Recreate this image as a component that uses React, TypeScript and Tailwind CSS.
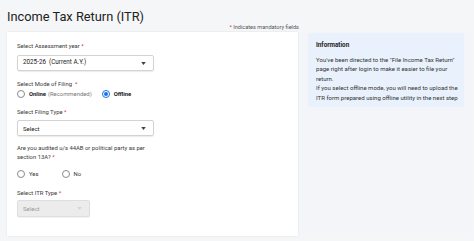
function Req() {
  return <span className="text-[#d32f2f]"> *</span>;
}

function Caret({ muted }: { muted?: boolean }) {
  return (
    <svg width="5" height="3" viewBox="0 0 6 4" className={muted ? "text-gray-300" : "text-gray-700"}>
      <path d="M0 0h6L3 4z" fill="currentColor" />
    </svg>
  );
}

function Radio({ checked, children }: { checked?: boolean; children: React.ReactNode }) {
  return (
    <label className="flex items-center gap-[4px]">
      <span
        className={`flex h-[8px] w-[8px] items-center justify-center rounded-full border ${
          checked ? "border-[#1a73e8]" : "border-[#8a8a8a]"
        }`}
      >
        {checked && <span className="h-[4px] w-[4px] rounded-full bg-[#1a73e8]" />}
      </span>
      {children}
    </label>
  );
}

export default function App() {
  return (
    <div
      className="h-[241px] w-[474px] overflow-hidden bg-[#f5f6f8] text-[#333]"
      style={{ fontFamily: "Roboto, 'Noto Sans', sans-serif" }}
    >
      <div className="flex w-[299px] flex-col pl-[7px] pt-[9px]">
        <h1 className="text-[12.8px] leading-[16px] text-[#222]">Income Tax Return (ITR)</h1>
        <div className="-mt-[1px] text-right text-[5.6px] leading-[6px] text-[#555]">
          <span className="text-[#d32f2f]">*</span> Indicates mandatory fields
        </div>
      </div>
      <div className="mt-[2px] flex gap-[2px] pl-[7px]">
        <div className="h-[204px] w-[291px] bg-white px-[10px] pt-[10px] text-[5.9px] shadow-[0_0_2px_rgba(0,0,0,0.1)]">
          <div className="leading-[8px] text-[#3a3a3a]">
            Select Assessment year<Req />
          </div>
          <div className="mt-[5px] flex h-[16px] w-[137px] items-center justify-between rounded-[2px] border border-[#d3d3d3] pl-[5px] pr-[7px] text-[6.3px] text-[#222] shadow-[0_1px_1px_rgba(0,0,0,0.08)]">
            <span>2025-26&nbsp;&nbsp;(Current A.Y.)</span>
            <Caret />
          </div>

          <div className="mt-[9px] leading-[8px] text-[#3a3a3a]">
            Select Mode of Filing&nbsp;<Req />
          </div>
          <div className="mt-[2px] flex h-[8px] items-center gap-[10px] text-[#222]">
            <Radio>
              <span className="font-bold">Online</span>
              <span className="-ml-[2px] text-[#777]">(Recommended)</span>
            </Radio>
            <Radio checked>
              <span className="font-bold">Offline</span>
            </Radio>
          </div>

          <div className="mt-[10px] leading-[8px] text-[#3a3a3a]">
            Select Filing Type<Req />
          </div>
          <div className="mt-[4px] flex h-[16px] w-[137px] items-center justify-between rounded-[2px] border border-[#d3d3d3] pl-[5px] pr-[7px] text-[6px] text-[#222] shadow-[0_1px_1px_rgba(0,0,0,0.08)]">
            <span>Select</span>
            <Caret />
          </div>

          <div className="mt-[8px] leading-[9px] text-[#3a3a3a]">
            Are you audited u/s 44AB or political party as per
            <br />
            section 13A?<Req />
          </div>
          <div className="mt-[8px] flex h-[8px] items-center gap-[23px] text-[#333]">
            <Radio>
              <span>Yes</span>
            </Radio>
            <Radio>
              <span>No</span>
            </Radio>
          </div>

          <div className="mt-[11px] leading-[8px] text-[#3a3a3a]">
            Select ITR Type<Req />
          </div>
          <div className="mt-[3px] flex h-[17px] w-[73px] items-center justify-between rounded-[2px] border border-[#dedede] bg-[#ececec] pl-[5px] pr-[7px] text-[6px] text-[#9a9a9a] shadow-[0_1px_1px_rgba(0,0,0,0.06)]">
            <span>Select</span>
            <Caret muted />
          </div>
        </div>

        <div className="h-[201px] w-[172px] bg-[#f3f5f9] px-[8px] pt-[1px]">
          <div className="rounded-[2px] bg-[#e9f2fc] px-[8px] pb-[5px] pt-[8px] text-[6.05px] leading-[9.4px] text-[#333]">
            <div className="mb-[6px] text-[6.3px] font-bold leading-[8px] text-[#222]">Information</div>
            <div className="whitespace-nowrap">
              You've been directed to the "File Income Tax Return"
              <br />
              page right after login to make it easier to file your
              <br />
              return.
              <br />
              If you select offline mode, you will need to upload the
              <br />
              ITR form prepared using offline utility in the next step
            </div>
          </div>
        </div>
      </div>
    </div>
  );
}
